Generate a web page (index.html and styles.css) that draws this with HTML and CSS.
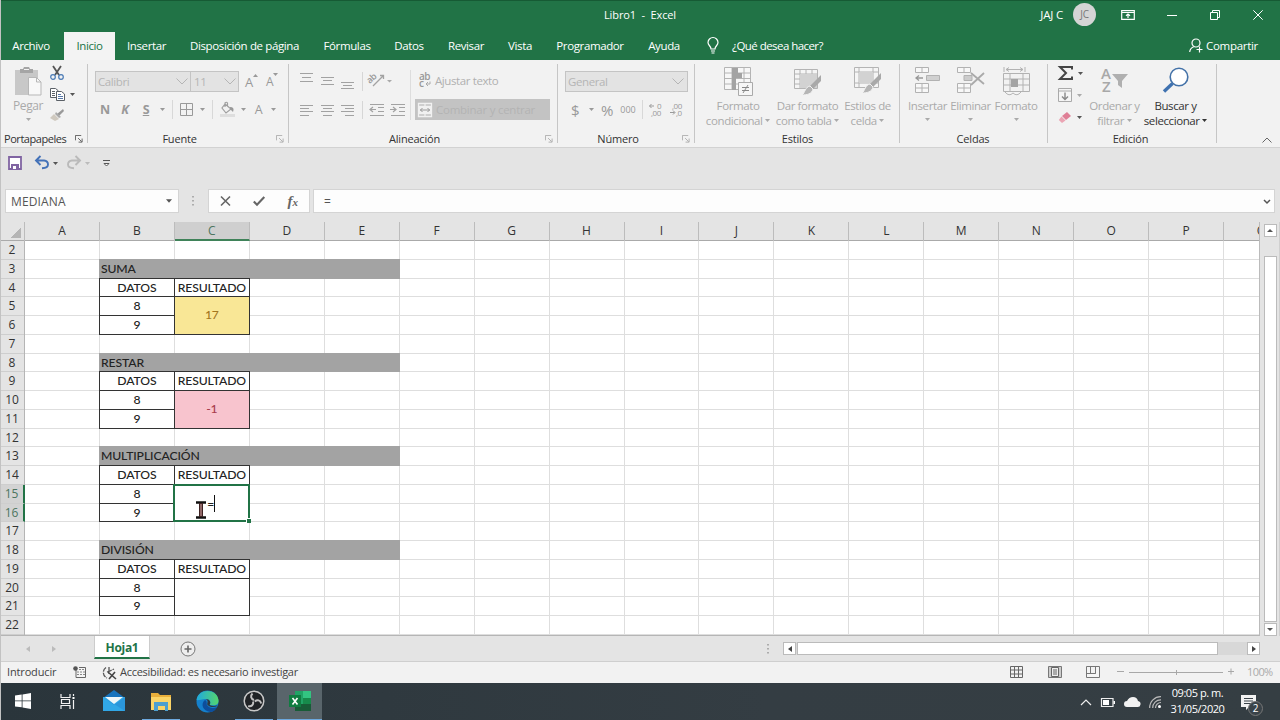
FILE: index.html
```html
<!DOCTYPE html>
<html lang="es">
<head>
<meta charset="utf-8">
<title>Libro1 - Excel</title>
<link rel="stylesheet" href="styles.css">
</head>
<body>
<svg class="defs" width="0" height="0">
  <symbol id="dd" viewBox="0 0 5 3"><path d="M0 0h5L2.5 3z" fill="currentColor"/></symbol>
  <symbol id="launch" viewBox="0 0 9 9"><path d="M.5 6V.5H7M3.5 3.5l4 4M8 4v4H4" fill="none" stroke="currentColor"/></symbol>
  <symbol id="chev" viewBox="0 0 12 7"><path d="M.5.5L6 6 11.500.5" fill="none" stroke="currentColor"/></symbol>
  <symbol id="brush" viewBox="0 0 22 22"><path d="M21 1v6l-8 8-3-3z" fill="#a9a9a9"/><path d="M10 12l3 3c-1 5-6 6-11 6 3-2 3-8 8-9z" fill="#b5b5b5" stroke="#f2f2f2"/></symbol>
</svg>
<div class="window">
  <header class="titlebar">
    <div class="doc-title">Libro1&nbsp; -&nbsp; Excel</div>
    <div class="account">
      <span class="user">JAJ C</span><span class="avatar">JC</span>
      <svg width="14" height="10" viewBox="0 0 14 10"><path d="M.7.7h12.600v8.600H.7zM.7 2.500h12.600M7 8V4M5 5.800L7 4l2 1.800" fill="none" stroke="#fff" stroke-width="1.200"/></svg>
      <svg width="10" height="10" viewBox="0 0 10 10"><path d="M0 5.500h10" stroke="#fff"/></svg>
      <svg width="10" height="10" viewBox="0 0 10 10"><path d="M.5 2.500h7v7h-7zM2.500 2.500v-2h7v7h-2" fill="none" stroke="#fff"/></svg>
      <svg width="10" height="10" viewBox="0 0 10 10"><path d="M.3.3l9.400 9.400M9.700.3L.3 9.700" stroke="#fff"/></svg>
    </div>
  </header>
  <nav class="tabs">
    <span>Archivo</span><span class="on">Inicio</span><span>Insertar</span><span>Disposición de página</span><span>Fórmulas</span><span>Datos</span><span>Revisar</span><span>Vista</span><span>Programador</span><span>Ayuda</span>
    <svg width="12" height="17" viewBox="0 0 12 17"><path d="M4 12c0-3-3-3.500-3-6.500a5 5 0 0 1 10 0C11 8.500 8 9 8 12zM4 14h4M4.500 16h3" fill="none" stroke="#fff" stroke-width="1.200"/></svg>
    <span class="ask">¿Qué desea hacer?</span>
    <span class="share"><svg width="14" height="15" viewBox="0 0 14 15"><circle cx="7" cy="5" r="4" fill="none" stroke="#fff" stroke-width="1.200"/><path d="M.7 14c.3-3 2-4.500 4-5.300M7.500 11.500h6M10.500 8.500v6" fill="none" stroke="#fff" stroke-width="1.200"/></svg>Compartir</span>
  </nav>

  <section class="ribbon">
    <div class="group g1">
      <div class="body">
        <div class="big paste">
          <svg width="27" height="29" viewBox="0 0 27 29"><path d="M0 3h23v25H0z" fill="#c8c8c8"/><path d="M5 2h3l1-2h5l1 2h3v4H5z" fill="#a5a5a5"/><path d="M9 2h5v1H9z" fill="#f3f3f3"/><path d="M13.500 10.500h8l4.500 4.500v13H13.500z" fill="#f8f8f8" stroke="#b7b7b7"/><path d="M21.500 10.500V15H26" fill="none" stroke="#b7b7b7"/></svg>
          <span>Pegar</span><svg class="dd" width="5" height="3"><use href="#dd"/></svg>
        </div>
        <div class="clip">
          <svg width="14" height="14" viewBox="0 0 14 14"><path d="M3 0l6 9M11 0L5 9" stroke="#555" stroke-width="1.800"/><circle cx="3" cy="11" r="2.300" fill="none" stroke="#4a7ab5" stroke-width="1.200"/><circle cx="11" cy="11" r="2.300" fill="none" stroke="#4a7ab5" stroke-width="1.200"/></svg>
          <div class="copy"><svg width="15" height="13" viewBox="0 0 15 13"><path d="M.5.5h5l2.500 2v7H.5zM2 3.500h3M2 5.500h3M2 7.500h3" fill="#fff" stroke="#5b6067"/><path d="M6.500 3.500h5l3 2.500v6.500h-8z" fill="#fff" stroke="#5b6067"/><path d="M8 6.500h3M8 8.500h5M8 10.500h5" stroke="#5878a8"/></svg><svg class="dark" width="5" height="3"><use href="#dd"/></svg></div>
          <svg width="14" height="13" viewBox="0 0 14 13"><path d="M13 0l1 2-5 5-2-2z" fill="#999"/><path d="M6 3l5 5-2 1-4-4z" fill="#aaa"/><path d="M4 5l5 5-4 2-5-3z" fill="#cfc9bf"/></svg>
        </div>
      </div>
      <div class="label"><span>Portapapeles</span><svg class="dark" width="8" height="8"><use href="#launch"/></svg></div>
    </div>

    <div class="group g2">
      <div class="body rows">
        <div class="row font-row">
          <span class="combo">Calibri<svg width="12" height="7"><use href="#chev"/></svg></span><span class="combo size">11<svg width="12" height="7"><use href="#chev"/></svg></span>
          <span class="fa">A<svg width="5" height="3" viewBox="0 0 5 3"><path d="M0 3h5L2.500 0z" fill="#999"/></svg></span><span class="fa small">A<svg width="5" height="3"><use href="#dd"/></svg></span>
        </div>
        <div class="row style-row">
          <b>N</b><b><i>K</i></b><b><u>S</u></b><svg width="5" height="3"><use href="#dd"/></svg><hr>
          <svg width="13" height="13" viewBox="0 0 13 13"><path d="M.5.5h12v12H.5zM6.500.5v12M.5 6.500h12" fill="none" stroke="#999"/></svg><svg width="5" height="3"><use href="#dd"/></svg><hr>
          <svg width="16" height="15" viewBox="0 0 16 15"><path d="M5 2l6 5-5 4-4-5zM5 5V1q1.500-1.500 2.500 0V4" fill="none" stroke="#a0a0a0" stroke-width="1.200"/><path d="M10 5q5 0 3 5l-3-3z" fill="#999"/><path d="M0 12h15v3H0z" fill="#dedede"/></svg><svg width="5" height="3"><use href="#dd"/></svg><span class="ac">A</span><svg width="5" height="3"><use href="#dd"/></svg>
        </div>
      </div>
      <div class="label"><span>Fuente</span><svg width="8" height="8"><use href="#launch"/></svg></div>
    </div>

    <div class="group g3">
      <div class="body align">
        <svg class="al" width="110" height="48" viewBox="0 0 110 48" fill="none" stroke="#a2a2a2">
          <path d="M0 1.500h13M2 5.500h9M0 9.500h13M21 5.500h13M23 8.500h9M21 12.500h13M41 10.500h13M43 13.500h9M41 16.500h13"/>
          <path d="M0 33.500h13M0 36.500h9M0 39.500h13M0 43.500h9M21 33.500h13M23 36.500h9M21 39.500h13M23 43.500h9M41 33.500h13M45 36.500h9M41 39.500h13M45 43.500h9"/>
          <path d="M62.500 0v19M62.500 29v18" stroke="#d6d6d6"/>
          <path d="M73 14L83 4M80 3.500h3.500V7" stroke-width="1.300"/>
          <text x="69" y="10" transform="rotate(-42 72 10)" fill="#999" stroke="none" font-size="9" font-weight="600">ab</text>
          <path d="M70 32.500h14M78 35.500h6M78 39.500h6M70 43.500h14M76 37.500h-6M73 35l-3 2.500 3 2.500M91 32.500h14M99 35.500h6M99 39.500h6M91 43.500h14M90 37.500h6M93 35l3 2.500-3 2.500" stroke-width="1.200"/>
          <path d="M87 8h5l-2.500 2.500z" fill="#aaa" stroke="none"/>
        </svg>
        <div class="merge">
          <div class="wrap-text"><svg width="13" height="16" viewBox="0 0 13 16"><text x="0" y="8" font-size="10" font-weight="600" fill="#999">ab</text><text x="0" y="15" font-size="10" font-weight="600" fill="#999">c</text><path d="M11 9.500V12H7M9 10l-2 2 2 2" fill="none" stroke="#aaa"/></svg><span>Ajustar texto</span></div>
          <div class="merge-btn"><svg width="14" height="14" viewBox="0 0 14 14"><path d="M.5.500h13v13H.5zM.5 3.500h13M.5 10.500h13M7 .5v3M7 10.500v3" fill="none" stroke="#f1f1f1" stroke-width="1.300"/><path d="M1 4h12v6H1z" fill="#f1f1f1"/><path d="M2 7h10M4.500 5L2.500 7l2 2M9.500 5l2 2-2 2" fill="none" stroke="#999"/></svg><span>Combinar y centrar</span></div>
        </div>
      </div>
      <div class="label"><span>Alineación</span><svg width="8" height="8"><use href="#launch"/></svg></div>
    </div>

    <div class="group g4">
      <div class="body rows">
        <div class="row"><span class="combo num">General<svg width="12" height="7"><use href="#chev"/></svg></span></div>
        <div class="row num-row"><span class="cur">$</span><svg width="5" height="3"><use href="#dd"/></svg><span class="pct">%</span><span class="mil">000</span><hr>
          <svg width="14" height="14" viewBox="0 0 14 14" fill="#999"><path d="M5 3H.5M2.500 1l-2 2 2 2" fill="none" stroke="#999"/><text x="8" y="6" font-size="8">0</text><text x="2" y="13" font-size="8">,00</text></svg>
          <svg width="14" height="14" viewBox="0 0 14 14" fill="#999"><text x="2" y="6" font-size="8">,00</text><path d="M0 9.500h4.500M3 7.500l2 2-2 2" fill="none" stroke="#999"/><text x="6" y="13" font-size="8">,0</text></svg></div>
      </div>
      <div class="label"><span>Número</span><svg width="8" height="8"><use href="#launch"/></svg></div>
    </div>

    <div class="group g5">
      <div class="body bigs">
        <div class="big"><svg width="29" height="29" viewBox="0 0 29 29"><path d="M.5.500h26v22H.5zM.5 6h26M.5 11.500h26M.5 17h26M8 .5v22M20 .5v22" fill="#f7f7f7" stroke="#b4b4b4"/><path d="M8 1h6v5H8zM8 6h10v5H8zM8 11h4v6H8zM8 17h4v6H8z" fill="#a3a3a3"/><path d="M14.500 15.500h14v13h-14z" fill="#f6f6f6" stroke="#aaa"/><path d="M18 20.500h7M18 23.500h7M24 18l-5 8" stroke="#888"/></svg><span>Formato<br>condicional <svg width="5" height="3"><use href="#dd"/></svg></span></div>
        <div class="big"><svg width="28" height="29" viewBox="0 0 28 29"><path d="M.5 2.500h23v19H.5zM.5 7h23M.5 12h23M.5 17h23M6 2.500v19M12 2.500v19M18 2.500v19" fill="#f5f5f5" stroke="#b4b4b4"/><path d="M6 7h17v14H6z" fill="#d2d2d2"/><use href="#brush" x="6" y="7" width="22" height="22"/></svg><span>Dar formato<br>como tabla <svg width="5" height="3"><use href="#dd"/></svg></span></div>
        <div class="big"><svg width="28" height="29" viewBox="0 0 28 29"><path d="M.5.500h24v20H.5zM.5 5h24M.5 16h24M5 .5v20M19 .5v20" fill="#f5f5f5" stroke="#b4b4b4"/><path d="M5 5h14v11H5z" fill="#d2d2d2"/><use href="#brush" x="6" y="5" width="22" height="22"/></svg><span>Estilos de<br>celda <svg width="5" height="3"><use href="#dd"/></svg></span></div>
      </div>
      <div class="label"><span>Estilos</span></div>
    </div>

    <div class="group g6">
      <div class="body bigs">
        <div class="big"><svg width="26" height="29" viewBox="0 0 26 29"><path d="M.5.500h13v5H.5zM7 .5v5M.5 16.500h13v9H.5zM7 16.500v9M.5 21h13" fill="#f8f8f8" stroke="#b2b2b2"/><path d="M11.500 8.500h13v5h-13z" fill="#d0d0d0" stroke="#b2b2b2"/><path d="M8 11H1M4 8.500L1 11l3 2.500" fill="none" stroke="#999" stroke-width="1.300"/></svg><span>Insertar</span><svg class="dd" width="5" height="3"><use href="#dd"/></svg></div>
        <div class="big"><svg width="28" height="29" viewBox="0 0 28 29"><path d="M.5.500h13v5H.5zM7 .5v5M.5 16.500h13v9H.5zM7 16.500v9M.5 21h13" fill="#f8f8f8" stroke="#b2b2b2"/><path d="M7 8.500h8v5H7z" fill="#ccc" stroke="#b2b2b2"/><path d="M14 6l13 11M27 6L14 18" stroke="#aaa" stroke-width="1.800"/></svg><span>Eliminar</span><svg class="dd" width="5" height="3"><use href="#dd"/></svg></div>
        <div class="big"><svg width="27" height="29" viewBox="0 0 27 29"><path d="M.5 6.500h26v18H.5zM.5 12h26M.5 18h26M7 6.500v18M20 6.500v18M1 0v5M22 0v5M3 2.500h17M6 .5L3 2.500l3 2M17 .5l3 2-3 2" fill="none" stroke="#b2b2b2"/><path d="M8 12h7v8H8z" fill="#a4a4a4"/><path d="M2 25q4 5 8 1 4 4 8-1" fill="#f4f4f4" stroke="#b5b5b5"/></svg><span>Formato</span><svg class="dd" width="5" height="3"><use href="#dd"/></svg></div>
      </div>
      <div class="label"><span>Celdas</span></div>
    </div>

    <div class="group g7">
      <div class="body edit">
        <div class="stack">
          <div class="dark"><svg width="15" height="14" viewBox="0 0 15 14"><path d="M14 3.500V1H2l6 6-6 6h12v-2.500" fill="none" stroke="#454545" stroke-width="2"/></svg><svg width="5" height="3"><use href="#dd"/></svg></div>
          <div><svg width="14" height="14" viewBox="0 0 14 14"><path d="M.5.500h13v13H.5zM.5 3h13" fill="#f5f5f5" stroke="#aaa"/><path d="M7 4.500v7M4 8.500l3 3 3-3" fill="none" stroke="#888" stroke-width="1.400"/></svg><svg width="5" height="3"><use href="#dd"/></svg></div>
          <div class="dark"><svg width="14" height="13" viewBox="0 0 14 13"><path d="M9 1l4 4-5 4-4-4z" fill="#df7f96"/><path d="M3.500 5.500l4 4L4 12 .8 9z" fill="#eba5b4"/></svg><svg width="5" height="3"><use href="#dd"/></svg></div>
        </div>
        <div class="big"><svg width="28" height="29" viewBox="0 0 28 29"><g fill="#a8a8a8" font-size="15" font-weight="600"><text x="0" y="12">A</text><text x="1" y="25">Z</text></g><path d="M11 7h16l-6 7v7l-4-3v-4z" fill="#b0b0b0"/></svg><span>Ordenar y<br>filtrar <svg width="5" height="3"><use href="#dd"/></svg></span></div>
        <div class="big active"><svg width="27" height="29" viewBox="0 0 27 29"><circle cx="17" cy="10" r="8.800" fill="#fff" stroke="#4472a8" stroke-width="1.600"/><path d="M10.500 16.500L2 24.500" stroke="#3f72b0" stroke-width="3.400"/></svg><span>Buscar y<br>seleccionar <svg width="5" height="3"><use href="#dd"/></svg></span></div>
      </div>
      <div class="label"><span>Edición</span></div>
    </div>
    <svg class="collapse" width="10" height="6" viewBox="0 0 10 6"><path d="M.5 5.500L5 1l4.500 4.500" fill="none" stroke="#666"/></svg>
  </section>

  <div class="qat">
    <svg width="14" height="14" viewBox="0 0 14 14"><path d="M1 1h12v12H1z" fill="#fff" stroke="#8064a2" stroke-width="1.800"/><path d="M3 8h8v5H3z" fill="#8064a2"/><path d="M5 10h3v3H5z" fill="#fff"/></svg>
    <svg class="undo" width="14" height="13" viewBox="0 0 14 13"><path d="M5.500 0L1 4.500 5.500 9M1.500 4.500H9q4 .5 4 4t-6 3.800" fill="none" stroke="#4472b8" stroke-width="1.900"/></svg><svg class="dark" width="5" height="3"><use href="#dd"/></svg>
    <svg class="redo" width="14" height="13" viewBox="0 0 14 13"><path d="M8.500 0L13 4.500 8.500 9M12.500 4.500H5q-4 .5-4 4t6 3.800" fill="none" stroke="#bababa" stroke-width="1.900"/></svg><svg width="5" height="3"><use href="#dd"/></svg>
    <svg class="more" width="7" height="7" viewBox="0 0 7 7"><path d="M0 .5h7M1 3.500h5L3.500 6z" fill="#fff" stroke="#555"/></svg>
  </div>

  <div class="formula-bar">
    <div class="name-box"><span>MEDIANA</span><svg width="6" height="4"><use href="#dd"/></svg></div>
    <svg class="grip" width="2" height="10" viewBox="0 0 2 10"><path d="M1 0v10" stroke="#999" stroke-width="1.500" stroke-dasharray="1.500 2.500"/></svg>
    <div class="fx">
      <svg width="11" height="10" viewBox="0 0 11 10"><path d="M1 .5l9 9M10 .5l-9 9" stroke="#666" stroke-width="1.600"/></svg>
      <svg width="12" height="10" viewBox="0 0 12 10"><path d="M.8 5.500L4 8.700 11.300 1" fill="none" stroke="#666" stroke-width="2.100"/></svg>
      <span><i>f<small>x</small></i></span>
    </div>
    <div class="formula"><span>=</span><svg width="8" height="5" viewBox="0 0 8 5"><path d="M1 1l3 3 3-3" fill="none" stroke="#555" stroke-width="1.500"/></svg></div>
  </div>

  <main class="sheet">
    <div class="sheet-main">
      <div class="col-heads"><span class="corner"></span><span>A</span><span>B</span><span class="sel">C</span><span>D</span><span>E</span><span>F</span><span>G</span><span>H</span><span>I</span><span>J</span><span>K</span><span>L</span><span>M</span><span>N</span><span>O</span><span>P</span><span class="q">Q</span></div>
      <div class="grid-wrap">
        <div class="row-heads"><span>2</span><span>3</span><span>4</span><span>5</span><span>6</span><span>7</span><span>8</span><span>9</span><span>10</span><span>11</span><span>12</span><span>13</span><span>14</span><span class="sel">15</span><span class="sel">16</span><span>17</span><span>18</span><span>19</span><span>20</span><span>21</span><span>22</span></div>
        <div class="cells">
          <div class="op suma"><h2>SUMA</h2><span>DATOS</span><span>RESULTADO</span><span>8</span><span class="result yellow">17</span><span>9</span></div>
          <div class="op restar"><h2>RESTAR</h2><span>DATOS</span><span>RESULTADO</span><span>8</span><span class="result pink">-1</span><span>9</span></div>
          <div class="op multi"><h2>MULTIPLICACIÓN</h2><span>DATOS</span><span>RESULTADO</span><span>8</span><span class="result editing">=<i class="caret"></i><i class="handle"></i><svg class="ibeam" width="12" height="18" viewBox="0 0 12 18"><path d="M1 1.500h10M1 16.500h10" stroke="#111" stroke-width="2.500"/><path d="M6 2v14" stroke="#3d2222" stroke-width="4"/><path d="M6 3v12" stroke="#a77b7b" stroke-width="1.600"/></svg></span><span>9</span></div>
          <div class="op division"><h2>DIVISIÓN</h2><span>DATOS</span><span>RESULTADO</span><span>8</span><span class="result"></span><span>9</span></div>
        </div>
      </div>
    </div>
    <div class="vscroll">
      <span class="btn"><svg width="6" height="3" viewBox="0 0 6 3"><path d="M0 3h6L3 0z" fill="#555"/></svg></span>
      <span class="thumb"></span>
      <span class="btn"><svg width="6" height="3" viewBox="0 0 6 3"><path d="M0 0h6L3 3z" fill="#555"/></svg></span>
    </div>
  </main>

  <div class="sheet-tabs">
    <div class="tabnav"><svg width="4" height="6" viewBox="0 0 4 6"><path d="M4 0v6L0 3z" fill="#bbb"/></svg><svg width="4" height="6" viewBox="0 0 4 6"><path d="M0 0v6l4-3z" fill="#bbb"/></svg></div>
    <div class="sheet-tab">Hoja1</div>
    <svg class="add" width="16" height="16" viewBox="0 0 16 16"><circle cx="8" cy="8" r="7" fill="#eee" stroke="#777"/><path d="M4.500 8h7M8 4.500v7" stroke="#666" stroke-width="1.600"/></svg>
    <svg class="dots" width="2" height="10" viewBox="0 0 2 10"><path d="M1 0v10" stroke="#999" stroke-width="1.500" stroke-dasharray="1.500 2.500"/></svg>
    <div class="hscroll"><span class="btn"><svg width="4" height="6" viewBox="0 0 4 6"><path d="M4 0v6L0 3z" fill="#444"/></svg></span><span class="thumb"></span><span class="btn"><svg width="4" height="6" viewBox="0 0 4 6"><path d="M0 0v6l4-3z" fill="#444"/></svg></span></div>
  </div>

  <footer class="status">
    <span class="mode">Introducir</span>
    <svg class="macro" width="13" height="12" viewBox="0 0 13 12"><path d="M3 3.500V11.500h9.500v-10H6" fill="#f5f5f5" stroke="#666"/><path d="M6 3.500h6M4 6h8M4 8.500h8" stroke="#888" stroke-dasharray="2 1"/><circle cx="2.500" cy="2.500" r="2.300" fill="#555"/></svg>
    <svg class="acc" width="16" height="14" viewBox="0 0 16 14"><path d="M4 1.500A6 6 0 0 0 5 12M7 1v7M5 6l3-1 4-2" fill="none" stroke="#555" stroke-width="1.300" stroke-dasharray="5 1"/><path d="M6 6l8 7M13 6l-6 7" stroke="#444" stroke-width="1.600"/></svg>
    <span class="acc-text">Accesibilidad: es necesario investigar</span>
    <div class="views">
      <svg width="13" height="12" viewBox="0 0 13 12"><path d="M.5.500h12v11H.5zM4.500.5v11M8.500.5v11M.5 4h12M.5 8h12" fill="none" stroke="#666"/></svg>
      <svg width="14" height="12" viewBox="0 0 14 12"><path d="M.5.500h13v11H.5z" fill="#ccc" stroke="#777"/><path d="M3.500 1.500h7v9h-7zM5 4h4M5 6h4M5 8h4" fill="#eee" stroke="#666"/></svg>
      <svg width="14" height="12" viewBox="0 0 14 12"><path d="M.5.500h13v11H.5zM4.500.5v7h5v-7M.5 7.500h9" fill="#f5f5f5" stroke="#777"/></svg>
    </div>
    <svg class="zoom" width="118" height="8" viewBox="0 0 118 8"><path d="M0 3.500h7M12 4.500h94M59.500 2v5M111 3.500h6M114 .5v6" fill="none" stroke="#a8a8a8"/></svg>
    <span class="pct100">100%</span>
  </footer>

  <div class="taskbar">
    <div class="apps">
      <span><svg width="16" height="16" viewBox="0 0 16 16"><path d="M0 2.500L6.700 1.500v6H0zM7.500 1.400L16 0v7.500H7.500zM0 8.300h6.700v6L0 13.500zM7.500 8.300H16V16l-8.500-1.400z" fill="#fff"/></svg></span>
      <span><svg width="16" height="15" viewBox="0 0 16 15"><path d="M1 0v3.500h9V0M1.500 5.500h8v4h-8zM1 15v-3.500h9V15M13.500 0v2M13.500 6v9" fill="none" stroke="#f2f2f2" stroke-width="1.200"/><path d="M12.500 3h2v2h-2z" fill="#fff"/></svg></span>
      <span><svg width="24" height="22" viewBox="0 0 24 22"><path d="M1 8L12 0l11 8z" fill="#1673bd"/><path d="M1 7h22v14H1z" fill="#31a7e6"/><path d="M1 7l11 8 11-8v14z" fill="#2b96da"/><path d="M3 7h18l-9 7z" fill="#eef6f8"/></svg></span>
      <span class="open"><svg width="22" height="19" viewBox="0 0 22 19"><path d="M1 1h7l2 2h11v15H1z" fill="#e9af3b"/><path d="M1 5h20v13H1z" fill="#fbd467"/><path d="M4 10h14v9h-3v-5H8v5H4z" fill="#4d9fcf"/></svg></span>
      <span><svg width="23" height="23" viewBox="0 0 23 23"><defs><linearGradient id="eg"><stop stop-color="#1fa9df"/><stop offset="1" stop-color="#55d66c"/></linearGradient></defs><circle cx="11.500" cy="11.500" r="11" fill="#1580cc"/><path d="M.5 10C2-2 21-2 22.500 10c.5 5-4 6-9 5 2-3 0-6-4-6s-8 2-9 1z" fill="url(#eg)"/><path d="M9 10c-5 4-2 11 5 12 3 0 6-2 7-5-4 2-8 1-10-2-.6-1 .5-4-2-5z" fill="#0d4e9c"/><path d="M13.500 15c2-3 0-6-4-6 4 2 1 4 2 6 2 2 6 3 10 1l-.5-.5c-2 .7-5 .6-7.500-.5z" fill="#2f3940"/></svg></span>
      <span class="open"><svg width="22" height="22" viewBox="0 0 22 22"><circle cx="11" cy="11" r="9.800" fill="#202326" stroke="#c7c7c7" stroke-width="1.500"/><g fill="none" stroke="#c2c2c2" stroke-width="2"><path id="ob" d="M11 10C8 9 7 6 9.500 3.500"/><use href="#ob" transform="rotate(120 11 11)"/><use href="#ob" transform="rotate(240 11 11)"/></g></svg></span>
      <span class="open current"><svg width="22" height="20" viewBox="0 0 22 20"><path d="M6 0h16v20H6z" fill="#21a366"/><path d="M14 0h8v7h-8z" fill="#33c481"/><path d="M14 7h8v6h-8z" fill="#178a4b"/><path d="M6 13h16v7H6z" fill="#185c37"/><path d="M0 4h12v12H0z" fill="#107c41"/><path d="M3.500 7l5 6.500M8.500 7l-5 6.500" stroke="#fff" stroke-width="1.600"/></svg></span>
    </div>
    <div class="tray">
      <svg width="12" height="7" viewBox="0 0 12 7"><path d="M1 6l5-5 5 5" fill="none" stroke="#eee" stroke-width="1.200"/></svg>
      <svg width="14" height="9" viewBox="0 0 14 9"><path d="M.5.500h11.500v8H.5z" fill="none" stroke="#eee" stroke-width="1.200"/><path d="M2 2h6v5H2zM12.500 3H14v3h-1.500z" fill="#fff"/></svg>
      <svg width="16" height="10" viewBox="0 0 16 10"><path d="M3 10a3 3 0 0 1 0-6q2-4 6-4t5 4a3 3 0 0 1-1 6z" fill="#f2f2f2"/></svg>
      <svg width="12" height="12" viewBox="0 0 12 12"><path d="M.7 12A11 11 0 0 1 12 .7M3.700 12A8 8 0 0 1 12 3.800M6.500 12A5.500 5.500 0 0 1 12 6.500" fill="none" stroke="#bbb" stroke-width="1.200"/><circle cx="10.500" cy="10.500" r="1.500" fill="#fff"/></svg>
      <div class="clock"><span>09:05 p. m.</span><span>31/05/2020</span></div>
      <div class="notif"><svg width="16" height="15" viewBox="0 0 16 15"><path d="M0 0h15v12H8l-3 3v-3H0z" fill="#f2f2f2"/><path d="M3 3.500h9M3 6h9M3 8.500h7" stroke="#3a4349"/></svg><span class="badge">2</span></div>
    </div>
  </div>
</div>
</body>
</html>
```
FILE: styles.css
```css
* { box-sizing: border-box; }
body { margin: 0; font: 500 11.5px "Open Sans", "Noto Sans", sans-serif; color: #333; }
svg { flex: none; display: block; overflow: visible; letter-spacing: -.5px; }
.defs { position: absolute; }
.window { width: 1280px; height: 720px; display: flex; flex-direction: column; overflow: hidden; background: #e4e4e4; border-left: 1px solid #c2c2c2; white-space: nowrap; }
.window > * { flex: none; margin-left: -1px; width: 1280px; }

.titlebar { height: 31px; background: #217346; border-top: 1px solid #165a34; display: grid; grid-template-columns: 1280px; color: #fff; align-items: center; }
.titlebar > * { grid-area: 1 / 1; }
.doc-title { text-align: center; font-size: 11px; padding-bottom: 4px; letter-spacing: -.1px; }
.account { display: flex; align-items: center; justify-content: flex-end; padding: 0 17px 3px 0; }
.user { font-size: 11.5px; letter-spacing: -.2px; margin-right: 10px; }
.avatar { width: 23px; height: 23px; border-radius: 50%; background: #d5d5d5; color: #777; font-size: 10px; line-height: 23px; text-align: center; margin-right: 25px; letter-spacing: -.3px; }
.account svg + svg { margin-left: 33px; }
.account svg:nth-of-type(2) { margin-left: 32px; }

.tabs { height: 29px; background: #217346; color: #fff; display: grid; grid-template-columns: 62px 53px 63px 133px 72px 52px 62px 46px 94px 54px 44px 1fr auto; font-size: 11.5px; line-height: 29px; text-align: center; letter-spacing: -.38px; }
.tabs .on { background: #f3f3f3; color: #217346; margin: 1px 0 0 2px; line-height: 28px; }
.tabs > svg { align-self: center; justify-self: center; }
.tabs .ask { text-align: left; letter-spacing: -.55px; margin-left: -3px; }
.share { display: flex; align-items: center; gap: 3px; padding-right: 22px; letter-spacing: -.3px; }

.ribbon { height: 88px; background: #f2f2f2; display: flex; border-bottom: 1px solid #d2d2d2; color: #aaa; letter-spacing: -.4px; }
.group { display: flex; flex-direction: column; padding-top: 4px; background: linear-gradient(#c6c6c6, #c6c6c6) right 4px / 1px 79px no-repeat; }
.g1 { width: 88px; } .g2 { width: 201px; } .g3 { width: 269px; } .g4 { width: 137px; } .g5 { width: 205px; } .g6 { width: 148px; } .g7 { width: 169px; }
.group > .body { height: 67px; display: flex; }
.label { height: 16px; display: grid; grid-template-columns: 1fr; align-items: center; justify-items: center; font-size: 11px; line-height: 16px; color: #333; letter-spacing: -.2px; }
.label > * { grid-area: 1 / 1; }
.label svg { justify-self: end; margin-right: 5px; color: #aaa; }
.g1 .label span { justify-self: start; margin-left: 4px; letter-spacing: -.45px; }
.g2 .label span { margin-right: 18px; }
.g3 .label span { margin-right: 18px; }
.g4 .label span { margin-right: 17px; }
.g6 .label span { margin-right: 2px; }
.g7 .label span { margin-right: 4px; }
.label svg.dark, .dark { color: #555; }
.big { display: flex; flex-direction: column; align-items: center; text-align: center; line-height: 15px; padding-top: 3px; }
.big > span { margin-top: 2px; }
.big span svg { display: inline-block; vertical-align: 3px; }
.big .dd { margin-top: 5px; }
.active { color: #333; }
.paste { width: 40px; margin-left: 7px; padding-left: 2px; }
.paste span { font-size: 12px; }
.clip { display: flex; flex-direction: column; gap: 8px; padding: 2px 0 0 3px; }
.copy { display: flex; gap: 5px; align-items: center; }
.rows { flex-direction: column; padding: 7px 0 0 7px; gap: 7px; }
.row { height: 21px; display: flex; align-items: center; }
.combo { width: 96px; height: 21px; border: 1px solid #c4c4c4; background: #e3e3e3; color: #b5b5b5; display: flex; align-items: center; justify-content: space-between; padding: 0 2px 0 2px; }
.combo.size { width: 49px; margin-left: -1px; padding-left: 3px; }
.combo.num { width: 123px; padding-right: 3px; }
.fa { display: flex; width: 20px; margin-left: 6px; font-size: 13px; color: #999; align-items: flex-start; margin-right: -5px; line-height: 16px; }
.fa.small { font-size: 12px; margin-left: 6px; line-height: 18px; }
.style-row { display: grid; grid-template-columns: 20px 20px 22px 10px 11px 17px 14px 7px 24px 6px 25px 5px; justify-items: center; color: #999; font-size: 12.5px; }
hr { width: 1px; height: 19px; border: 0; background: #d8d8d8; margin: 0; }
.align { padding: 7px 8px 0 11px; justify-content: space-between; }
.al { margin-top: 1px; }
.merge { width: 140px; padding-left: 4px; border-left: 1px solid #ddd; height: 50px; margin-top: -1px; }
.wrap-text { height: 20px; margin-bottom: 9px; display: flex; align-items: center; gap: 3px; padding-left: 4px; color: #b0b0b0; }
.merge-btn { height: 21px; background: #c3c3c3; color: #b3b3b3; display: flex; align-items: center; gap: 4px; padding-left: 3px; letter-spacing: -.25px; }
.num-row { display: grid; grid-template-columns: 20px 12px 20px 22px 7px 20px 22px; justify-items: center; color: #999; }
.cur, .pct { font-size: 15px; } .mil { font-size: 9px; letter-spacing: 0; }
.bigs { padding-left: 8px; }
.g5 .big:nth-child(1) { width: 70px; } .g5 .big:nth-child(2) { width: 69px; } .g5 .big:nth-child(3) { width: 51px; }
.g6 .big { width: 43px; } .g6 .big:nth-child(3) { width: 48px; }
.g6 .bigs { padding-left: 6px; }
.stack { width: 36px; padding-left: 10px; display: flex; flex-direction: column; gap: 8px; padding-top: 3px; margin-top: -1px; }
.stack div { display: flex; align-items: center; gap: 5px; }
.stack > div { height: 14px; }
.g7 .big { width: 61px; } .g7 .big.active { width: 61px; }
.collapse { margin: 77px 0 0 45px; }

.qat { height: 41px; display: flex; align-items: flex-start; padding: 8px 0 0 8px; color: #bbb; }
.undo { margin-left: 13px; } .redo { margin-left: 9px; }
.qat > svg[width="5"] { margin: 6px 0 0 4px; }
.qat > .more { margin: 4px 0 0 13px; }

.formula-bar { height: 24px; display: flex; align-items: center; padding: 0 5px; font-size: 12px; color: #555; }
.formula-bar > div { height: 24px; background: #fdfdfd; border: 1px solid #d4d4d4; display: flex; align-items: center; justify-content: space-between; }
.name-box { width: 174px; padding: 0 6px 0 5px; }
.grip { margin: 0 14px 0 13px; }
.name-box span { letter-spacing: .15px; }
.fx { width: 102px; padding: 0 11px; }
.fx i { font-family: "Liberation Serif", serif; font-size: 15px; font-weight: bold; color: #666; }
.fx small { font-size: 11px; }
.formula { flex: 1; margin-left: 3px; padding: 0 3px 0 10px; }

.sheet { height: 423px; display: flex; padding-top: 9px; }
.sheet-main { width: 1260px; height: 414px; overflow: hidden; border-right: 1px solid #bbb; border-bottom: 1px solid #b5b5b5; }
.col-heads { display: grid; grid-template-columns: 25px repeat(17, 74.94px); height: 19px; border-bottom: 1px solid #aaa; font-size: 12px; line-height: 18px; text-align: center; }
.col-heads span { border-right: 1px solid #bcbcbc; }
.col-heads .sel { background: #cfcfcf; color: #4d7560; border-bottom: 2px solid #3f8259; height: 19px; }
.col-heads .q { border: 0; }
.corner { background: linear-gradient(135deg, transparent 50%, #b5b5b5 50%) 10px 5px / 11px 11px no-repeat; }
.grid-wrap { display: flex; }
.row-heads { flex: none; width: 25px; border-right: 1px solid #b5b5b5; display: grid; grid-auto-rows: 18.76px; font-size: 12px; line-height: 18.76px; text-align: center; }
.row-heads span { border-bottom: 1px solid #cecece; }
.row-heads .sel { background: #d3d3d3; color: #4d7560; border-right: 2px solid #217346; margin-right: -1px; }
.cells { flex: none; width: 1236px; height: 395px; display: grid; grid-template-columns: repeat(17, 74.94px); grid-template-rows: repeat(22, 18.76px); background:
  repeating-linear-gradient(to right, transparent 0 73.94px, #dedede 73.94px 74.94px),
  repeating-linear-gradient(to bottom, #fff 0 17.76px, #dedede 17.76px 18.76px); }
.op { grid-column: 2 / span 4; display: grid; grid-template-columns: subgrid; grid-template-rows: subgrid; font-family: Lato, sans-serif; font-size: 12.2px; color: #222; text-align: center; line-height: 18px; letter-spacing: -.1px; }
.suma { grid-row: 2 / span 4; } .restar { grid-row: 7 / span 4; } .multi { grid-row: 12 / span 4; } .division { grid-row: 17 / span 4; }
.op h2 { grid-column: 1 / 5; grid-row: 1; margin: -1px 0 0 -1px; padding: 0 0 0 2px; background: #a3a3a3; text-align: left; font: inherit; line-height: 20px; }
.op > span { grid-column: 1; margin: -1px 0 0 -1px; border: 1px solid #333; background: #fff; }
.op > span:nth-of-type(1) { grid-row: 2; }
.op > span:nth-of-type(2) { grid-row: 2; grid-column: 2; }
.op > span:nth-of-type(3) { grid-row: 3; }
.op > span.result { grid-column: 2; grid-row: 3 / span 2; line-height: 36px; }
.op > span:nth-of-type(5) { grid-row: 4; }
.op > .yellow { background: #f9e796; color: #a3761f; }
.op > .pink { background: #f8c4ce; color: #a83d4c; }
.op > .editing { border: 2px solid #217346; margin-left: -2px; position: relative; z-index: 1; }
.caret { display: inline-block; width: 1px; height: 17px; background: #111; vertical-align: -4px; }
.handle { position: absolute; right: -3px; bottom: -3px; width: 5px; height: 5px; background: #217346; border: solid #fff; border-width: 1px 0 0 1px; }
.ibeam { position: absolute; left: 20px; top: 15px; }
.vscroll { width: 20px; display: flex; flex-direction: column; align-items: center; padding-top: 2px; border-right: 1px solid #d0d0d0; padding-left: 1px; }
.btn { width: 13px; height: 13px; background: #fff; border: 1px solid #bbb; display: flex; align-items: center; justify-content: center; flex: none; }
.vscroll .thumb { width: 13px; flex: 1; margin-top: 19px; background: #fff; border: 1px solid #bbb; margin-bottom: 1px; }

.sheet-tabs { height: 26px; display: flex; align-items: center; border-bottom: 1px solid #cfcfcf; }
.tabnav { width: 94px; display: flex; gap: 22px; padding-left: 26px; }
.sheet-tab { width: 56px; height: 23px; background: #fff; border: 1px solid #ccc; border-top: 0; border-bottom: 2px solid #217346; align-self: flex-start; text-align: center; color: #217346; font-weight: 700; font-size: 12px; line-height: 23px; letter-spacing: -.3px; }
.add { margin-left: 30px; }
.dots { margin: 0 14px 0 571px; }
.hscroll { display: flex; width: 477px; background: #d8d8d8; }
.hscroll .thumb { width: 421px; height: 13px; background: #fff; border: 1px solid #bbb; margin: 0 auto 0 1px; }

.status { height: 21px; background: #f2f2f2; display: flex; align-items: center; font-size: 11px; color: #444; letter-spacing: -.28px; padding-bottom: 2px; }
.mode { width: 66px; margin-left: 7px; letter-spacing: -.15px; }
.acc { margin: 2px 2px 0 16px; }
.views { display: flex; gap: 24.500px; margin-left: auto; margin-right: 17px; }
.pct100 { color: #aaa; width: 27px; margin: 0 6px 0 12px; letter-spacing: -.6px; }

.taskbar { height: 38px; background: linear-gradient(90deg, #2a353b, #343d43 60%, #353e43); display: flex; justify-content: space-between; }
.apps { display: flex; }
.apps span { width: 46px; display: flex; align-items: center; justify-content: center; border-bottom: 2px solid transparent; }
.apps span:nth-child(2) { width: 45px; margin-right: 1px; }
.apps span:nth-child(1) { width: 45px; }
.apps .open { border-color: #6da9df; width: 38px; margin: 0 4px 0 5px; }
.apps .current { width: 45px; background: #59656b; margin: 0; }
.tray { display: flex; align-items: center; color: #fff; width: 200px; }
.tray > svg + svg { margin-left: 9px; }
.clock { display: flex; flex-direction: column; width: 57px; margin-left: 8px; font-size: 11px; line-height: 16.500px; text-align: center; letter-spacing: -.45px; align-items: center; padding-bottom: 2px; }
.notif { margin-left: 15px; position: relative; }
.badge { position: absolute; left: 7px; top: 6px; width: 15px; height: 15px; border-radius: 50%; background: #3a4349; border: 1px solid #777; font-size: 10px; line-height: 13px; text-align: center; }
```
